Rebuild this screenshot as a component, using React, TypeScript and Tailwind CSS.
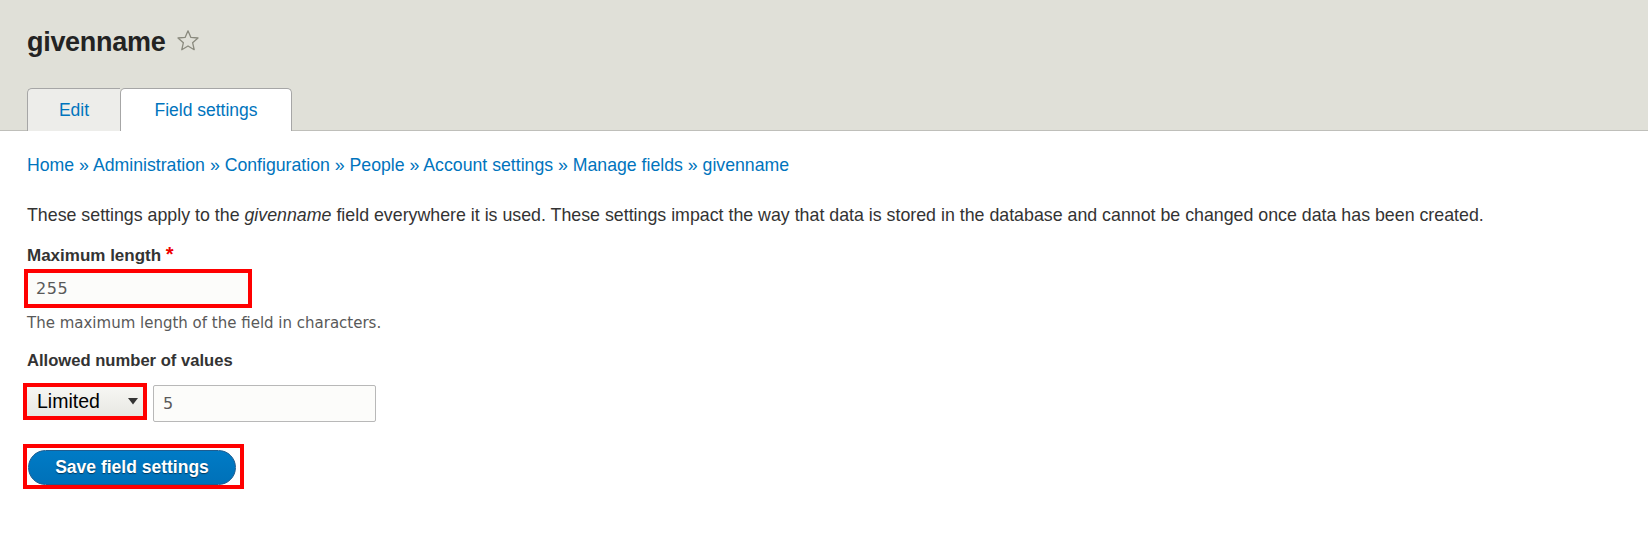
export default function App() {
  return (
    <div className="min-h-[539px] bg-white text-[#333] font-['Liberation_Sans',Arial,sans-serif]">
      {/* Page header with title and tabs */}
      <div className="h-[131px] bg-[#e0e0d8] border-b border-[#bfbfba] px-[27px] flex flex-col justify-between">
        <div className="pt-[27px] flex items-center gap-[11px]">
          <h1 className="text-[27px] leading-[30px] font-bold text-[#232323] tracking-[-0.3px]">givenname</h1>
          <svg width="24" height="24" viewBox="0 0 24 24" className="mt-[-2px]">
            <path
              d="M12 1.8l2.9 6.6 7.1.6-5.4 4.7 1.6 7-6.2-3.7-6.2 3.7 1.6-7L2 9l7.1-.6z"
              fill="none"
              stroke="#8a8a7e"
              strokeWidth="1.3"
              strokeLinejoin="round"
            />
          </svg>
        </div>
        <div className="flex items-end -mb-px">
          <a className="h-[43px] w-[93px] flex items-center justify-center bg-[#ededea] border-l border-t border-[#a6a6a6] rounded-tl-[5px] text-[#0074bd] text-[17.5px]">
            Edit
          </a>
          <a className="h-[43px] w-[172px] flex items-center justify-center bg-white border-l border-t border-r border-[#a6a6a6] rounded-t-[5px] text-[#0074bd] text-[17.5px]">
            Field settings
          </a>
        </div>
      </div>

      <div className="px-[27px]">
        {/* Breadcrumb */}
        <nav className="mt-[24px] text-[17.7px] leading-[20px] text-[#0074bd]">
          <a>Home</a> » <a>Administration</a> » <a>Configuration</a> » <a>People</a> » <a>Account settings</a> »{" "}
          <a>Manage fields</a> » <a>givenname</a>
        </nav>

        <p className="mt-[30px] text-[17.8px] leading-[20px] text-[#333]">
          These settings apply to the <em>givenname</em> field everywhere it is used. These settings impact the way that
          data is stored in the database and cannot be changed once data has been created.
        </p>

        {/* Maximum length */}
        <label className="block mt-[21px] text-[17px] leading-[20px] font-bold text-[#333]">
          Maximum length <span className="text-[#e00] text-[20px] leading-[16px] align-top">*</span>
        </label>
        <div className="mt-[3px] -ml-[3px] w-[228px] border-4 border-[#ff0000]">
          <div className="h-[31px] bg-[#fcfcfa] flex items-center px-[8px] text-[16px] tracking-[0.6px] text-[#595959] font-['DejaVu_Sans',sans-serif]">
            255
          </div>
        </div>
        <p className="mt-[6px] text-[15px] leading-[18px] text-[#595959] font-['DejaVu_Sans',sans-serif]">
          The maximum length of the field in characters.
        </p>

        {/* Allowed number of values */}
        <label className="block mt-[19px] text-[16.6px] leading-[20px] font-bold text-[#333]">
          Allowed number of values
        </label>
        <div className="mt-[12px] -ml-[4px] flex items-start gap-[6px]">
          <div className="w-[124px] border-4 border-[#ff0000]">
            <div className="h-[29px] bg-linear-to-b from-[#f6f6f3] to-[#e8e8e3] flex items-center justify-between pl-[10px] pr-[5px] text-[19.5px] text-black">
              Limited
              <svg width="10" height="7" viewBox="0 0 10 7">
                <path d="M0 0h10L5 6.5z" fill="#333" />
              </svg>
            </div>
          </div>
          <div className="mt-[2px] w-[223px] h-[37px] bg-[#fcfcfa] border border-[#b8b8b8] rounded-[2px] flex items-center px-[9px] text-[16px] text-[#595959] font-['DejaVu_Sans',sans-serif]">
            5
          </div>
        </div>

        {/* Submit */}
        <div className="mt-[22px] -ml-[4px] inline-flex border-4 border-[#ff0000] pl-px pr-[4px] pt-[2px]">
          <button className="w-[208px] h-[35px] rounded-full bg-linear-to-b from-[#007bc6] to-[#0071b8] border border-[#1e5c90] text-white font-bold text-[17.5px] [text-shadow:0_1px_1px_rgba(0,0,0,0.5)]">
            Save field settings
          </button>
        </div>
      </div>
    </div>
  );
}
